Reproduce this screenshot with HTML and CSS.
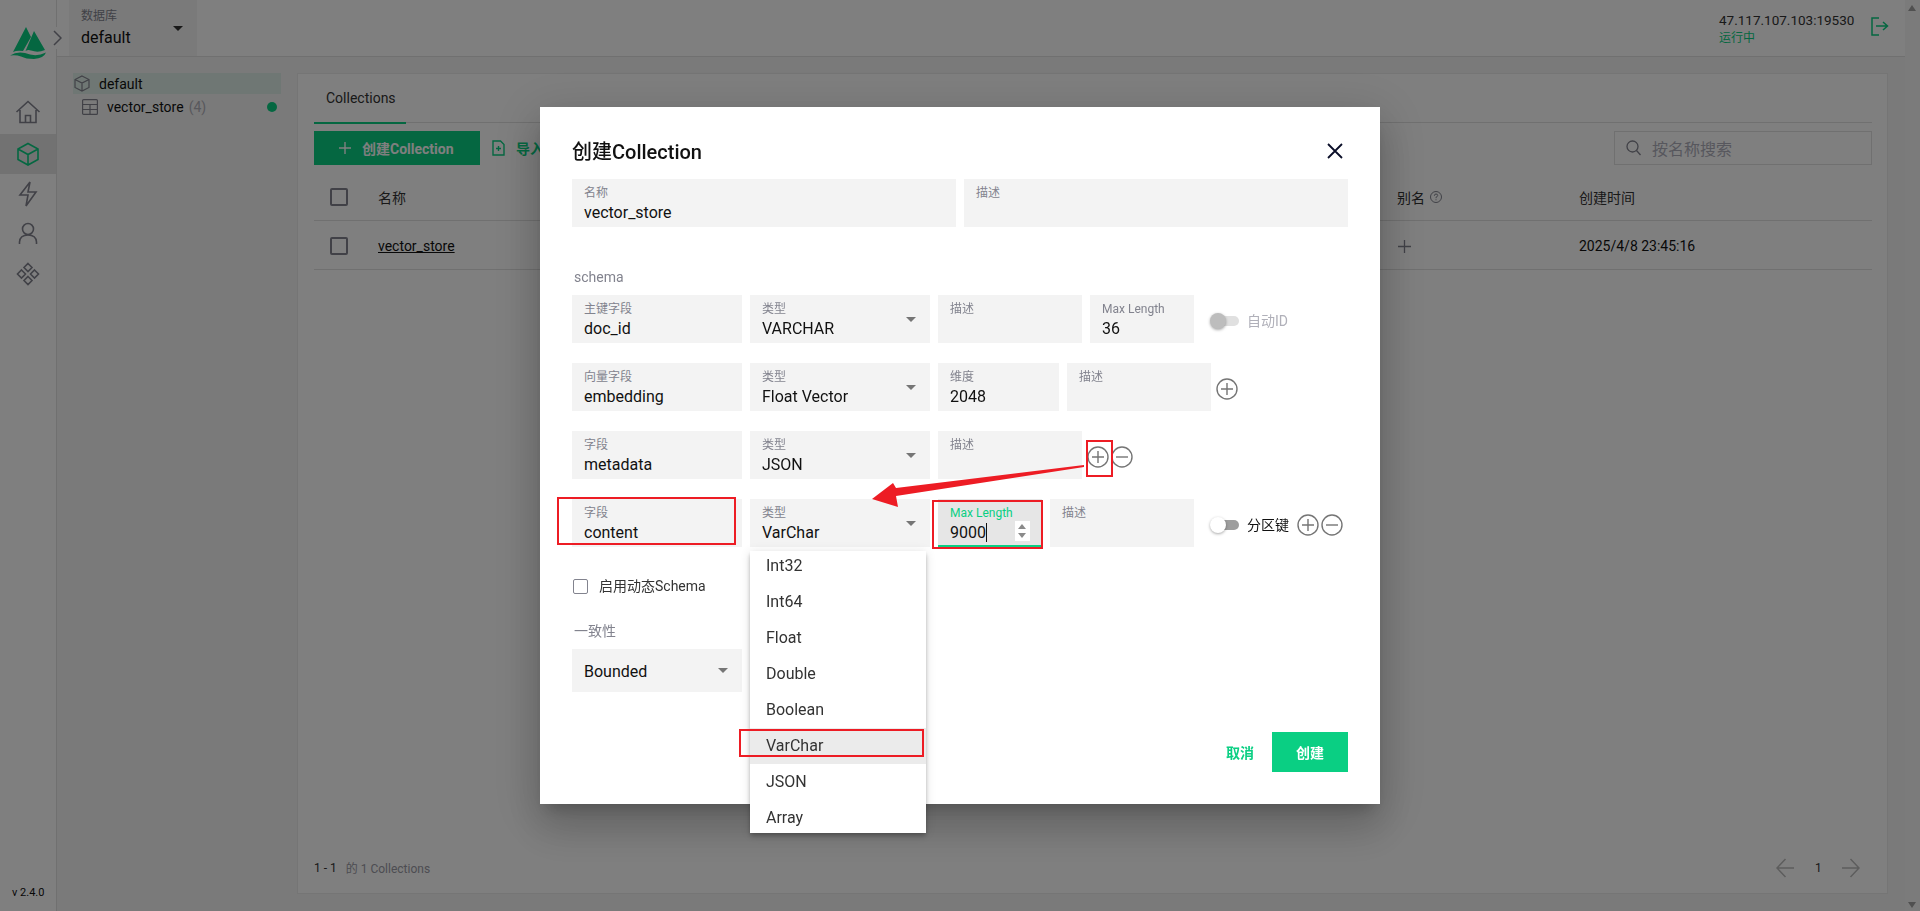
FILE: index.html
```html
<!DOCTYPE html>
<html lang="zh">
<head>
<meta charset="utf-8">
<title>Attu</title>
<link rel="stylesheet" href="styles.css">
</head>
<body>
<div class="app">
  <aside class="sidebar">
    <svg class="logo" viewBox="0 0 36 32"><path d="M16 0 L21 10 L13 24 Q7 23 3 25 Z M24 4 L35 23 Q28 26 21 23.500 Q18 22.500 15.500 24 Z" fill="#0acf83"/><path d="M0 28.500 Q7 24 15 26 Q26 30.500 36 25.500 Q34 31 24 32 Q16 32 11 29.500 Q6 27.500 0 28.500 Z" fill="#0acf83"/></svg>
    <nav class="nav">
      <div class="nav-item home"><svg width="26" height="24" viewBox="0 0 26 24" fill="none" stroke="#82838e" stroke-width="1.600"><path d="M1.500 12 L13 1.500 L24.500 12 M5 10 V22.500 H21 V10 M10.500 22.500 V15.500 H15.500 V22.500"/></svg></div>
      <div class="nav-item active"><svg width="24" height="24" viewBox="0 0 24 24" fill="none" stroke="#0acf83" stroke-width="1.600"><path d="M12 1.500 L22 7 V17.500 L12 23 L2 17.500 V7 Z M2 7 L12 12.500 L22 7 M12 12.500 V23"/></svg></div>
      <div class="nav-item"><svg width="20" height="26" viewBox="0 0 20 26" fill="none" stroke="#82838e" stroke-width="1.600"><path d="M12 1 L2 14 H10 L8 25 L18 11 H10 Z" stroke-linejoin="miter"/></svg></div>
      <div class="nav-item"><svg width="20" height="24" viewBox="0 0 20 24" fill="none" stroke="#82838e" stroke-width="1.600"><circle cx="10" cy="7" r="5.500"/><path d="M1.500 22 V20 Q2 13 10 13 Q18 13 18.500 20 V22"/></svg></div>
      <div class="nav-item"><svg width="24" height="24" viewBox="0 0 24 24" fill="none" stroke="#82838e" stroke-width="1.600"><path d="M12 1.500 L16 5.500 L12 9.500 L8 5.500 Z M12 14.500 L16 18.500 L12 22.500 L8 18.500 Z M5.500 8 L9.500 12 L5.500 16 L1.500 12 Z M18.500 8 L22.500 12 L18.500 16 L14.500 12 Z"/></svg></div>
    </nav>
    <div class="version">v 2.4.0</div>
    <div class="expander"><svg width="9" height="16" viewBox="0 0 9 16" fill="none" stroke="#82838e" stroke-width="1.500"><path d="M1 1 L8 8 L1 15"/></svg></div>
  </aside>
  <div class="main">
    <header class="topbar">
      <div class="db-select">
        <div class="db-label">数据库</div>
        <div class="db-value">default</div>
        <span class="caret db-caret"></span>
      </div>
      <div class="conn">
        <div class="conn-addr">47.117.107.103:19530</div>
        <div class="conn-state">运行中</div>
      </div>
      <svg class="logout" width="18" height="19" viewBox="0 0 18 19" fill="none" stroke="#0acf83" stroke-width="1.500"><path d="M8 1 H1 V18 H8 M5 9 H16 M12 5 L16.500 9 L12 13"/></svg>
    </header>
    <div class="content">
      <div class="tree">
        <div class="tree-row selected">
          <svg width="16" height="17" viewBox="0 0 16 17" fill="none" stroke="#82838e" stroke-width="1.200"><path d="M8 1 L15 4.500 V12.500 L8 16 L1 12.500 V4.500 Z M1 4.500 L8 8 L15 4.500 M8 8 V16"/></svg>
          <span class="tree-name">default</span>
        </div>
        <div class="tree-row child">
          <svg width="16" height="16" viewBox="0 0 16 16" fill="none" stroke="#82838e" stroke-width="1.200"><rect x="0.600" y="0.600" width="14.800" height="14.800" rx="1"/><path d="M0.600 5.500 H15.400 M0.600 10.500 H15.400 M8 5.500 V15.400"/></svg>
          <span class="tree-name">vector_store</span>
          <span class="tree-count">(4)</span>
          <span class="dot"></span>
        </div>
      </div>
      <section class="card">
        <div class="tabs"><div class="tab">Collections</div></div>
        <div class="toolbar">
          <button class="btn-primary"><svg width="12" height="12" viewBox="0 0 12 12" stroke="#fff" stroke-width="1.400"><path d="M6 0 V12 M0 6 H12"/></svg>创建Collection</button>
          <div class="btn-import"><svg width="13" height="16" viewBox="0 0 13 16" fill="none" stroke="#0acf83" stroke-width="1.400"><path d="M1 1 H8.500 L12 4.500 V15 H1 Z M6.500 6 V11 M4 8.500 H9"/></svg>导入</div>
          <div class="search"><svg width="15" height="16" viewBox="0 0 15 16" fill="none" stroke="#82838e" stroke-width="1.300"><circle cx="6.500" cy="6.500" r="5.500"/><path d="M10.500 10.500 L14.500 15"/></svg><span>按名称搜索</span></div>
        </div>
        <div class="table-row head">
          <span class="check"></span><span>名称</span>
          <span class="alias">别名 <svg width="12" height="12" viewBox="0 0 12 12" fill="none" stroke="#82838e"><circle cx="6" cy="6" r="5.500"/><path d="M4.300 4.800 Q4.500 3 6 3 Q7.700 3 7.700 4.500 Q7.700 5.500 6 6.300 V7.200 M6 8.300 V9.300"/></svg></span>
          <span>创建时间</span>
        </div>
        <div class="table-row">
          <span class="check"></span><span class="link">vector_store</span>
          <span><svg class="alias-add" width="15" height="15" viewBox="0 0 15 15" stroke="#82838e" stroke-width="1.300"><path d="M7.500 1 V14 M1 7.500 H14"/></svg></span>
          <span class="cell-date">2025/4/8 23:45:16</span>
        </div>
        <div class="pager">
          <span class="range">1 - 1</span><span class="total">的 1 Collections</span>
          <div class="pages">
            <svg width="19" height="20" viewBox="0 0 19 20" fill="none" stroke="#bbb" stroke-width="1.500"><path d="M18 10 H2 M9.500 1 L1 10 L9.500 19"/></svg>
            <span class="page-num">1</span>
            <svg width="19" height="20" viewBox="0 0 19 20" fill="none" stroke="#bbb" stroke-width="1.500"><path d="M1 10 H17 M9.500 1 L18 10 L9.500 19"/></svg>
          </div>
        </div>
      </section>
    </div>
  </div>
  <div class="scrollbar"><span class="sb-up"></span><span class="sb-down"></span></div>
</div>

<div class="overlay">
  <div class="modal">
    <div class="modal-head">
      <h2>创建Collection</h2>
      <svg class="close" width="16" height="16" viewBox="0 0 16 16" stroke="#0a0e28" stroke-width="1.800"><path d="M1 1 L15 15 M15 1 L1 15"/></svg>
    </div>
    <div class="row name-row">
      <div class="field grow"><label>名称</label><div class="val">vector_store</div></div>
      <div class="field grow"><label>描述</label></div>
    </div>
    <div class="section-label">schema</div>
    <div class="row">
      <div class="field w-name"><label>主键字段</label><div class="val">doc_id</div></div>
      <div class="field w-type select"><label>类型</label><div class="val">VARCHAR</div></div>
      <div class="field w-desc"><label>描述</label></div>
      <div class="field w-max"><label>Max Length</label><div class="val">36</div></div>
      <div class="toggle disabled"><span class="track"></span><span class="knob"></span></div>
      <span class="toggle-label muted">自动ID</span>
    </div>
    <div class="row">
      <div class="field w-name"><label>向量字段</label><div class="val">embedding</div></div>
      <div class="field w-type select"><label>类型</label><div class="val">Float Vector</div></div>
      <div class="field w-dim"><label>维度</label><div class="val">2048</div></div>
      <div class="field w-desc"><label>描述</label></div>
      <div class="icons">
        <svg width="22" height="22" viewBox="0 0 22 22" fill="none" stroke="#757575" stroke-width="1.400"><circle cx="11" cy="11" r="10"/><path d="M11 5 V17 M5 11 H17"/></svg>
      </div>
    </div>
    <div class="row">
      <div class="field w-name"><label>字段</label><div class="val">metadata</div></div>
      <div class="field w-type select"><label>类型</label><div class="val">JSON</div></div>
      <div class="field w-desc"><label>描述</label></div>
      <div class="icons">
        <svg width="22" height="22" viewBox="0 0 22 22" fill="none" stroke="#757575" stroke-width="1.400"><circle cx="11" cy="11" r="10"/><path d="M11 5 V17 M5 11 H17"/></svg>
        <svg width="22" height="22" viewBox="0 0 22 22" fill="none" stroke="#757575" stroke-width="1.400"><circle cx="11" cy="11" r="10"/><path d="M5 11 H17"/></svg>
      </div>
    </div>
    <div class="row">
      <div class="field w-name"><label>字段</label><div class="val">content</div></div>
      <div class="field w-type select"><label>类型</label><div class="val">VarChar</div></div>
      <div class="field w-max focused"><label>Max Length</label><div class="val"><span class="cursor">9000</span></div>
        <div class="spin"><span class="spin-up"></span><span class="spin-down"></span></div>
      </div>
      <div class="field w-desc"><label>描述</label></div>
      <div class="toggle"><span class="track"></span><span class="knob"></span></div>
      <span class="toggle-label">分区键</span>
      <div class="icons tight">
        <svg width="22" height="22" viewBox="0 0 22 22" fill="none" stroke="#757575" stroke-width="1.400"><circle cx="11" cy="11" r="10"/><path d="M11 5 V17 M5 11 H17"/></svg>
        <svg width="22" height="22" viewBox="0 0 22 22" fill="none" stroke="#757575" stroke-width="1.400"><circle cx="11" cy="11" r="10"/><path d="M5 11 H17"/></svg>
      </div>
    </div>
    <div class="dynamic"><span class="check small"></span>启用动态Schema</div>
    <div class="section-label consistency">一致性</div>
    <div class="field w-name select short"><div class="val">Bounded</div></div>
    <div class="actions">
      <span class="cancel">取消</span>
      <button class="btn-create">创建</button>
    </div>

    <ul class="menu">
      <li>Int32</li><li>Int64</li><li>Float</li><li>Double</li><li>Boolean</li><li class="hover">VarChar</li><li>JSON</li><li>Array</li>
    </ul>
    <div class="mark mark-name"></div>
    <div class="mark mark-max"></div>
    <div class="mark mark-plus"></div>
    <div class="mark mark-item"></div>
    <svg class="arrow" width="240" height="60" viewBox="860 460 240 60"><path d="M1084 465 L896 488 L893 483 L872 499 L898 507 L896 496 L1084 467 Z" fill="#ed1c24"/></svg>
  </div>
</div>
</body>
</html>
```
FILE: styles.css
```css
* { box-sizing: border-box; }
html, body { margin: 0; height: 100%; overflow: hidden; }
body {
  font-family: Roboto, "Noto Sans CJK SC", sans-serif;
  background: #f5f5f5;
  color: #111;
}
.app { display: flex; height: 911px; }

/* sidebar */
.sidebar {
  position: relative;
  width: 57px;
  flex: none;
  background: #fff;
  border-right: 1px solid #e0e0e0;
  display: flex;
  flex-direction: column;
}
.logo { width: 36px; height: 32px; margin: 27px 0 0 10px; display: block; }
.nav { margin-top: 35px; display: flex; flex-direction: column; }
.nav-item { height: 40px; display: flex; align-items: center; justify-content: center; }
.nav-item.home svg { margin-top: -4px; }
.nav-item.active { background: #e4e4e4; }
.version { margin-top: auto; padding: 0 0 10px 12px; font-size: 11px; line-height: 16px; color: #111; }
.expander {
  position: absolute;
  top: 27px;
  left: 51px;
  width: 12px;
  height: 22px;
  background: #fff;
  display: flex;
  align-items: center;
  justify-content: center;
}

/* main */
.main { flex: 1; min-width: 0; display: flex; flex-direction: column; }
.topbar {
  height: 57px;
  flex: none;
  background: #fff;
  border-bottom: 1px solid #e0e0e0;
  display: flex;
  align-items: stretch;
}
.db-select {
  position: relative;
  margin-left: 12px;
  width: 128px;
  background: #f5f5f5;
  padding: 8px 12px;
}
.db-label { font-size: 12px; line-height: 16px; color: #82838e; }
.db-value { font-size: 16px; line-height: 24px; margin-top: 2px; color: #111; }
.caret, .select::after {
  width: 0;
  height: 0;
  border-left: 5px solid transparent;
  border-right: 5px solid transparent;
  border-top: 5px solid #757575;
}
.db-caret { position: absolute; right: 14px; top: 26px; border-top-color: #333; }
.conn { margin-left: auto; padding-top: 11px; width: 152px; }
.conn-addr { font-size: 13.500px; line-height: 18px; color: #333; white-space: nowrap; }
.conn-state { font-size: 12px; line-height: 18px; color: #0acf83; }
.logout { margin: 17px 16px 0 0; }
.content { flex: 1; display: flex; min-height: 0; padding-top: 16px; }

/* tree */
.tree { width: 240px; flex: none; padding: 0 0 0 16px; }
.tree-row { display: flex; align-items: center; height: 20px; font-size: 14px; width: 208px; }
.tree-row.selected { background: #dfeee8; padding-left: 1px; height: 21px; }
.tree-row.selected .tree-name { margin-left: 9px; }
.tree-row.child { padding-left: 9px; margin-top: 3px; }
.tree-row.child .tree-name { margin-left: 9px; }
.tree-count { margin-left: 5px; color: #b0b0b9; }
.dot { width: 10px; height: 10px; border-radius: 50%; background: #0acf83; margin-left: auto; margin-right: 4px; }

/* card */
.card {
  width: 1591px;
  height: 821px;
  flex: none;
  background: #fff;
  border: 1px solid #ebebeb;
  padding: 0 15px 0 16px;
  display: flex;
  flex-direction: column;
}
.tabs { height: 49px; border-bottom: 1px solid #e0e0e0; flex: none; }
.tab {
  width: 92px;
  height: 50px;
  padding: 14px 0 0 12px;
  font-size: 14px;
  line-height: 20px;
  color: #333;
  border-bottom: 2px solid #0acf83;
}
.toolbar { margin-top: 8px; display: flex; align-items: center; height: 34px; flex: none; }
.btn-primary {
  width: 166px;
  height: 34px;
  border: 0;
  border-radius: 0;
  padding: 0 0 0 25px;
  background: #0acf83;
  color: #fff;
  font: 700 14px Roboto, "Noto Sans CJK SC", sans-serif;
  display: flex;
  align-items: center;
  gap: 11px;
}
.btn-import {
  margin-left: 12px;
  display: flex;
  align-items: center;
  gap: 11px;
  font-size: 14px;
  font-weight: 700;
  color: #0acf83;
}
.search {
  margin-left: auto;
  width: 258px;
  height: 34px;
  border: 1px solid #e0e0e0;
  display: flex;
  align-items: center;
  gap: 11px;
  padding-left: 11px;
  font-size: 16px;
  color: #aeaebb;
}
.table-row {
  height: 49px;
  flex: none;
  display: grid;
  grid-template-columns: 64px 1019px 182px 1fr;
  align-items: center;
  border-bottom: 1px solid #e0e0e0;
  font-size: 14px;
  color: #333;
  padding-top: 2px;
}
.table-row.head { margin-top: 7px; padding-top: 1px; }
.check {
  width: 18px;
  height: 18px;
  margin-left: 16px;
  border: 2px solid #82838e;
  border-radius: 2px;
  display: block;
}
.alias { display: flex; align-items: center; gap: 5px; }
.alias-add { display: block; }
.link { color: #111; text-decoration: underline; }
.cell-date { color: #111; }
.pager { margin-top: auto; height: 50px; display: flex; align-items: center; font-size: 12px; padding-bottom: 1px; }
.range { color: #333; }
.total { margin-left: 9px; color: #9a9aa5; }
.pages { margin-left: auto; margin-right: 12px; display: flex; align-items: center; gap: 20px; }
.page-num { color: #333; width: 6px; }

/* scrollbar */
.scrollbar { position: relative; width: 15px; flex: none; background: #f7f7f7; }
.sb-up, .sb-down { position: absolute; left: 3px; width: 0; height: 0; border-left: 4px solid transparent; border-right: 4px solid transparent; }
.sb-up { top: 5px; border-bottom: 6px solid #a0a0a0; }
.sb-down { bottom: 3px; border-top: 6px solid #a0a0a0; }

/* overlay + modal */
.overlay {
  position: fixed;
  inset: 0;
  background: rgba(0, 0, 0, .5);
  display: flex;
  align-items: center;
  justify-content: center;
}
.modal {
  position: relative;
  width: 840px;
  height: 697px;
  background: #fff;
  padding: 29px 32px 32px;
  display: flex;
  flex-direction: column;
  box-shadow: 0 11px 15px -7px rgba(0,0,0,.2), 0 24px 38px 3px rgba(0,0,0,.14), 0 9px 46px 8px rgba(0,0,0,.12);
}
.modal-head { display: flex; justify-content: space-between; align-items: center; height: 32px; margin-bottom: 11px; flex: none; }
.modal-head h2 { margin: 0; font-size: 20px; line-height: 32px; font-weight: 500; color: #111; }
.close { margin-right: 5px; margin-top: -2px; }
.row { display: flex; gap: 8px; flex: none; margin-bottom: 20px; }
.row.name-row { margin-bottom: 0; }
.field {
  position: relative;
  height: 48px;
  background: #f3f3f3;
  padding: 6px 12px 0;
  flex: none;
}
.field label { display: block; font-size: 12px; line-height: 16px; color: #82838e; white-space: nowrap; }
.val { font-size: 16px; line-height: 24px; color: #111; white-space: nowrap; }
.grow { flex: 1; }
.w-name { width: 170px; }
.w-type { width: 180px; }
.w-desc { width: 144px; }
.w-max { width: 104px; }
.w-dim { width: 121px; }
.select::after { content: ""; position: absolute; right: 14px; top: 22px; }
.section-label { margin: 40px 0 8px 2px; font-size: 14px; line-height: 20px; color: #82838e; flex: none; }
.focused { background: #e6e6e6; border-bottom: 2px solid #0acf83; }
.focused label { color: #0acf83; }
.cursor { border-right: 1px solid #111; padding-right: 0; }
.spin { position: absolute; left: 77px; top: 22px; width: 15px; height: 20px; background: #fff; }
.spin-up, .spin-down { position: absolute; left: 3px; width: 0; height: 0; border-left: 4px solid transparent; border-right: 4px solid transparent; }
.spin-up { top: 3px; border-bottom: 5px solid #8a8a8a; }
.spin-down { bottom: 3px; border-top: 5px solid #8a8a8a; }
.toggle { position: relative; width: 29px; height: 16px; margin: 4px 0 0 8px; align-self: center; flex: none; }
.track { position: absolute; left: 4px; right: 0; top: 3px; height: 10px; border-radius: 5px; background: #9e9e9e; }
.knob { position: absolute; left: 0; top: 0; width: 16px; height: 16px; border-radius: 50%; background: #fff; box-shadow: 0 1px 3px rgba(0,0,0,.35); }
.toggle.disabled .track { background: #e0e0e0; }
.toggle.disabled .knob { background: #bdbdbd; }
.toggle-label { align-self: center; margin-top: 4px; font-size: 14px; line-height: 20px; color: #111; white-space: nowrap; }
.toggle-label.muted { color: #b0b0b9; }
.icons { display: flex; gap: 2px; align-self: center; margin: 4px 0 0 -3px; }
.icons svg { display: block; }
.icons.tight { margin-left: 0; }
.dynamic { display: flex; align-items: center; font-size: 14px; line-height: 20px; color: #333; margin-top: 9px; flex: none; }
.check.small { width: 15px; height: 15px; margin: 0 11px 0 1px; border: 1.500px solid #82838e; }
.section-label.consistency { margin: 25px 0 8px 2px; }
.short { height: 43px; padding-top: 11px; }
.short::after { top: 19px; }
.actions { margin-top: auto; display: flex; justify-content: flex-end; align-items: center; gap: 18px; flex: none; }
.cancel { font-size: 14px; font-weight: 700; color: #0acf83; }
.btn-create {
  width: 76px;
  height: 40px;
  border: 0;
  background: #0acf83;
  color: #fff;
  font: 700 14px Roboto, "Noto Sans CJK SC", sans-serif;
}

/* dropdown */
.menu {
  position: absolute;
  left: 210px;
  top: 444px;
  width: 176px;
  height: 282px;
  margin: 0;
  padding: 0;
  list-style: none;
  background: #fff;
  overflow: hidden;
  box-shadow: 0 2px 4px -1px rgba(0,0,0,.2), 0 4px 5px rgba(0,0,0,.14), 0 1px 10px rgba(0,0,0,.12);
}
.menu li { height: 36px; line-height: 36px; padding-left: 16px; font-size: 16px; color: #333; }
.menu li:first-child { margin-top: -3px; }
.menu li.hover { background: #ebebeb; }

/* annotations */
.mark { position: absolute; border: 2px solid #ed1c24; }
.mark-name { left: 17px; top: 390px; width: 179px; height: 48px; }
.mark-max { left: 392px; top: 393px; width: 111px; height: 49px; }
.mark-plus { left: 546px; top: 333px; width: 27px; height: 37px; }
.mark-item { left: 199px; top: 622px; width: 185px; height: 28px; }
.arrow { position: absolute; left: 320px; top: 353px; }
```
